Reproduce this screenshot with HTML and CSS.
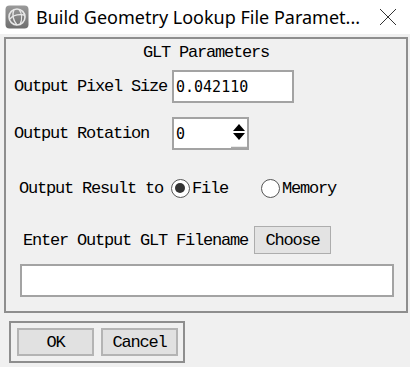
FILE: index.html
```html
<!DOCTYPE html>
<html>
<head>
    <meta charset="UTF-8">
    <title>Build Geometry Lookup File Parameters</title>
    <link rel="stylesheet" href="styles.css">
</head>
<body>
    <div class="titlebar">
        <svg class="app-icon" width="24" height="24" viewBox="0 0 24 24">
            <defs>
                <linearGradient id="ig" x1="0" y1="0" x2="0" y2="1">
                    <stop offset="0" stop-color="#9a9a9a"/>
                    <stop offset="1" stop-color="#6e6e6e"/>
                </linearGradient>
            </defs>
            <rect x="0.5" y="0.5" width="23" height="23" rx="4" fill="url(#ig)"/>
            <circle cx="12" cy="12" r="8" fill="none" stroke="#e8e8e8" stroke-width="1.6"/>
            <path d="M5 14 C8 10 13 9 19.5 10" fill="none" stroke="#e8e8e8" stroke-width="1.4"/>
            <path d="M9 4.8 C7 9 8 15 12 20" fill="none" stroke="#e8e8e8" stroke-width="1.4"/>
            <path d="M14 4.5 C17 8 17.5 14 15 19.5" fill="none" stroke="#e8e8e8" stroke-width="1.2"/>
        </svg>
        <span class="title-text">Build Geometry Lookup File Paramet...</span>
        <svg class="close" width="18" height="18" viewBox="0 0 18 18">
            <path d="M1 1 L17 17 M17 1 L1 17" stroke="#333" stroke-width="1"/>
        </svg>
    </div>

    <div class="panel">
        <div class="legend">GLT Parameters</div>

        <div class="row row-pixel">
            <label class="label">Output Pixel Size</label>
            <div class="field field-pixel">0.042110</div>
        </div>

        <div class="row row-rotation">
            <label class="label">Output Rotation</label>
            <div class="field field-spin">
                <span>0</span>
                <svg class="spin" width="16" height="30" viewBox="0 0 16 30">
                    <path d="M2 12 L8 5 L14 12 Z" fill="#000"/>
                    <path d="M2 14 L8 21 L14 14 Z" fill="#000"/>
                    <path d="M0 28.5 H16" stroke="#a8a8a8" stroke-width="1.5"/>
                </svg>
            </div>
        </div>

        <div class="row row-result">
            <span class="label-inline">Output Result to</span>
            <span class="radio checked"></span>
            <span class="radio-text">File</span>
            <span class="radio"></span>
            <span class="radio-text">Memory</span>
        </div>

        <div class="row row-filename">
            <span class="label-inline">Enter Output GLT Filename</span>
            <button class="btn btn-choose">Choose</button>
        </div>

        <div class="row row-path">
            <div class="field field-path"></div>
        </div>
    </div>

    <div class="actions">
        <button class="btn btn-action">OK</button>
        <button class="btn btn-action">Cancel</button>
    </div>
</body>
</html>
```

FILE: styles.css
```css
body {
    margin: 0;
    background: #f0f0f0;
    font-family: 'Liberation Mono', 'DejaVu Sans Mono', monospace;
    font-size: 17px;
    letter-spacing: -1.2px;
    color: #000;
    height: 367px;
    overflow: hidden;
}

.titlebar {
    height: 34px;
    background: #fff;
    display: flex;
    align-items: center;
    padding-left: 5px;
    box-sizing: border-box;
}

.app-icon {
    flex: none;
}

.title-text {
    font-family: 'Noto Sans', 'Open Sans', sans-serif;
    font-size: 18px;
    letter-spacing: 0;
    margin-left: 7px;
    color: #000;
    white-space: nowrap;
}

.close {
    margin-left: auto;
    margin-right: 13px;
}

.panel {
    margin: 3px 2px 0 4px;
    border: 2px solid #8e8e8e;
    height: 276px;
    box-sizing: border-box;
    padding-top: 2px;
}

.legend {
    height: 24px;
    line-height: 24px;
    text-align: center;
}

.row {
    display: flex;
    align-items: center;
}

.row-pixel {
    margin-top: 5px;
    padding-left: 8px;
}

.row-rotation {
    margin-top: 14px;
    padding-left: 8px;
}

.label {
    width: 158px;
    flex: none;
}

.field {
    background: #fff;
    border: 2px solid #a3a3a3;
    box-sizing: border-box;
    height: 33px;
    font-family: 'DejaVu Sans Mono', monospace;
    font-size: 15px;
    letter-spacing: 0;
    display: flex;
    align-items: center;
    padding-left: 2px;
}

.field-pixel {
    width: 122px;
}

.field-spin {
    width: 77px;
    justify-content: space-between;
    padding-right: 0;
}

.spin {
    display: block;
}

.row-result {
    margin-top: 26px;
    height: 24px;
    padding-left: 13px;
}

.label-inline {
    white-space: nowrap;
}

.radio {
    width: 19px;
    height: 19px;
    box-sizing: border-box;
    border: 1.5px solid #555;
    border-radius: 50%;
    background: #fff;
    margin-left: 8px;
    position: relative;
    flex: none;
}

.radio.checked::after {
    content: "";
    position: absolute;
    left: 3px;
    top: 3px;
    width: 10px;
    height: 10px;
    border-radius: 50%;
    background: #333;
}

.radio-text {
    margin-left: 2px;
    margin-right: 25px;
}

.row-filename {
    margin-top: 26px;
    padding-left: 17px;
}

.btn {
    font-family: 'Liberation Mono', 'DejaVu Sans Mono', monospace;
    font-size: 17px;
    letter-spacing: -1.2px;
    color: #000;
    padding: 0;
    cursor: pointer;
}

.btn-choose {
    margin-left: 6px;
    width: 77px;
    height: 28px;
    background: #e3e3e3;
    border: 1px solid #adadad;
}

.row-path {
    margin-top: 10px;
    padding-left: 14px;
}

.field-path {
    width: 374px;
}

.actions {
    margin: 8px 0 0 9px;
    width: 176px;
    height: 42px;
    box-sizing: border-box;
    border: 2px solid #8e8e8e;
    display: flex;
    gap: 7px;
    padding: 5px 0 0 6px;
}

.btn-action {
    width: 77px;
    height: 28px;
    background: #e1e1e1;
    border: 2px solid #b4b4b4;
}
```
